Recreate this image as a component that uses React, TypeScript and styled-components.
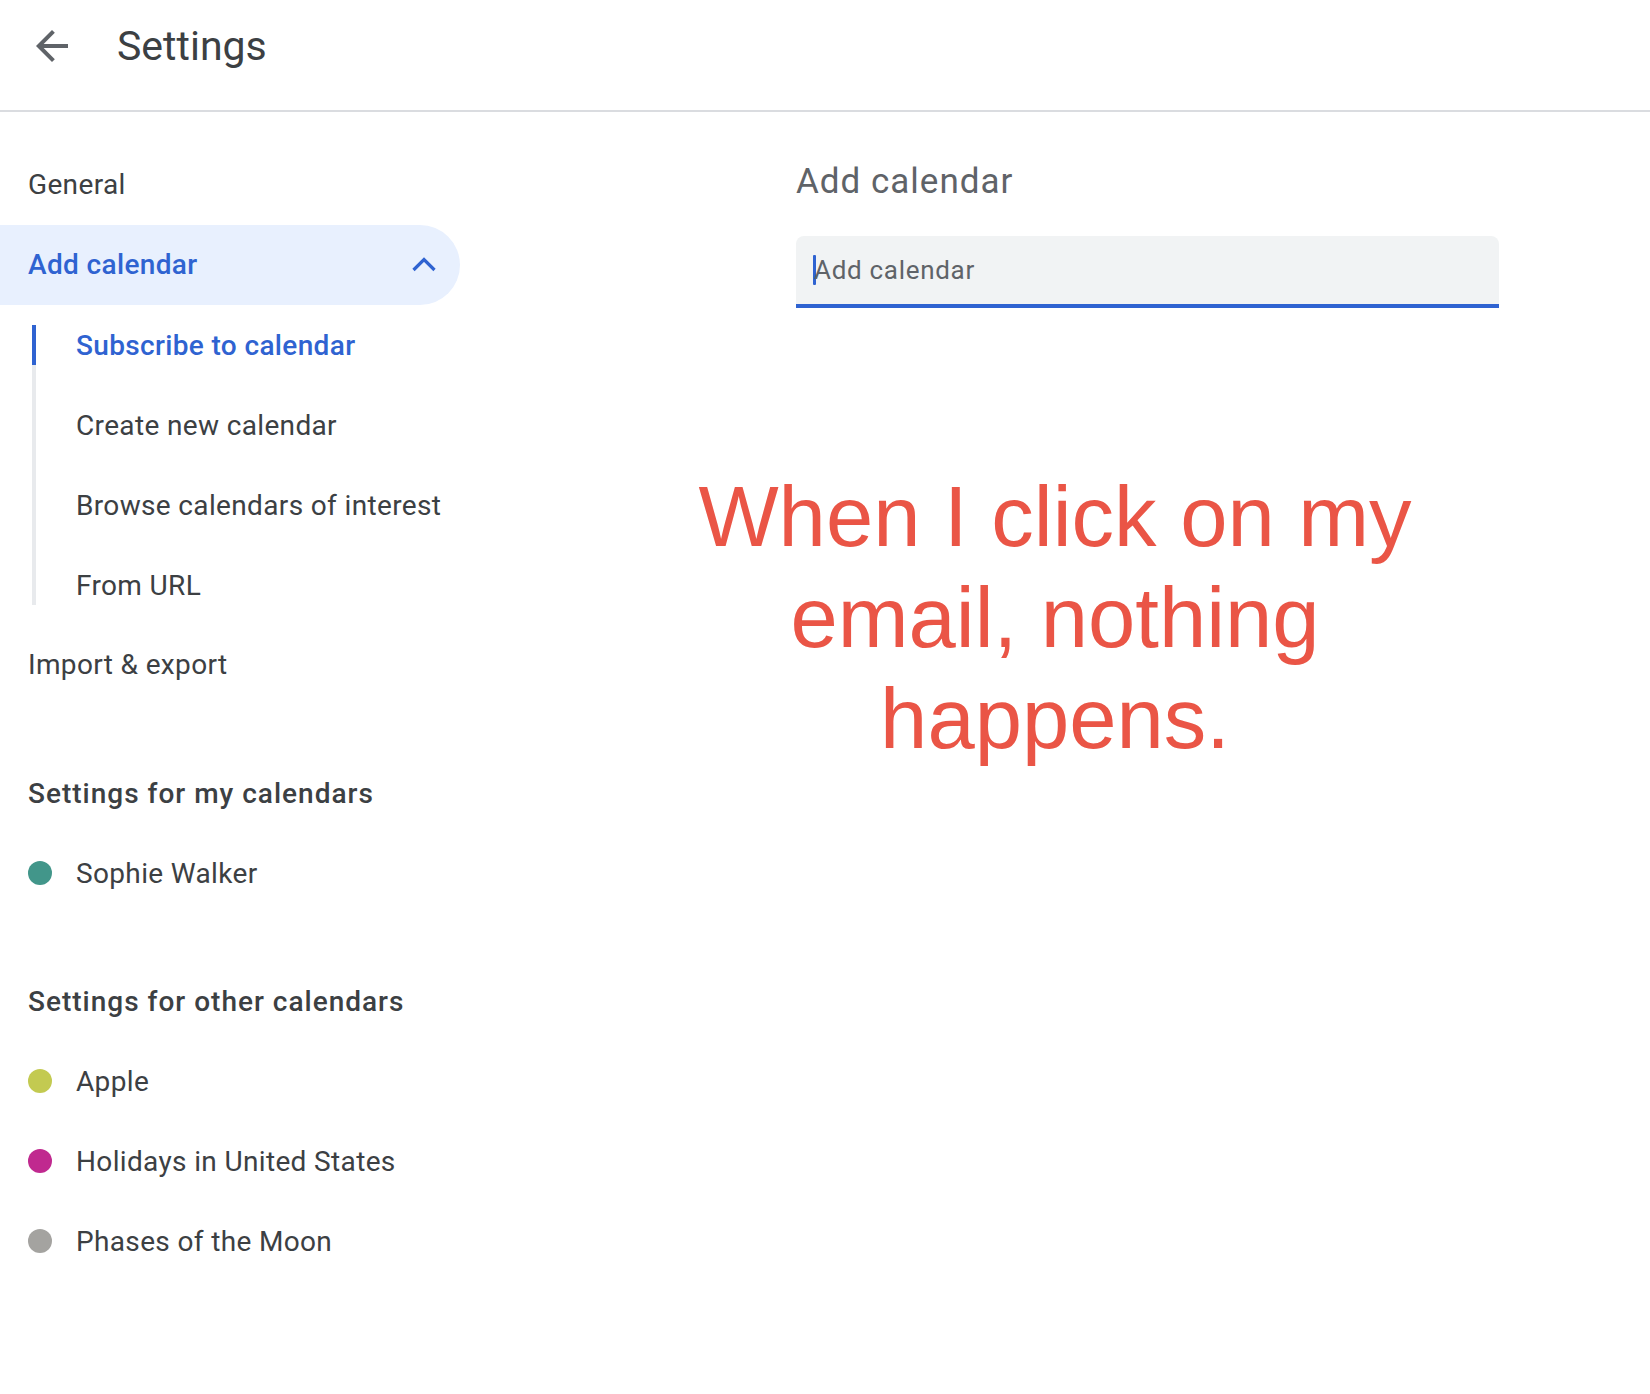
import React from "react";
import styled, { createGlobalStyle } from "styled-components";

const GlobalStyle = createGlobalStyle`
  html, body {
    margin: 0;
    padding: 0;
    background: #fff;
  }
  body {
    font-family: Roboto, "Noto Sans", "Liberation Sans", sans-serif;
    color: #3c4043;
  }
`;

const Page = styled.div`
  width: 1650px;
  min-height: 1394px;
  background: #fff;
`;

const Header = styled.header`
  height: 92px;
  padding: 0 0 18px 28px;
  display: flex;
  align-items: center;
  gap: 41px;
  border-bottom: 2px solid #dadce0;
`;

const BackButton = styled.button`
  width: 48px;
  height: 48px;
  padding: 0;
  border: none;
  background: none;
  display: flex;
  align-items: center;
  justify-content: center;
  cursor: pointer;
  color: #5f6368;
`;

const Title = styled.h1`
  margin: 0;
  font-size: 41px;
  font-weight: 400;
  color: #3c4043;
  line-height: 48px;
`;

const Body = styled.div`
  display: flex;
  align-items: flex-start;
`;

const Sidebar = styled.nav`
  width: 460px;
  padding-top: 33px;
  flex-shrink: 0;
  display: flex;
  flex-direction: column;
`;

interface NavItemProps {
  $active?: boolean;
}

const NavItem = styled.div<NavItemProps>`
  height: 80px;
  padding: 0 23px 0 28px;
  display: flex;
  align-items: center;
  justify-content: space-between;
  font-size: 28px;
  letter-spacing: 0.35px;
  line-height: 80px;
  cursor: pointer;
  color: ${(p) => (p.$active ? "#2f63d1" : "#3c4043")};
  font-weight: ${(p) => (p.$active ? 500 : 400)};
  background: ${(p) => (p.$active ? "#e8f0fe" : "transparent")};
  border-radius: 0 40px 40px 0;
`;

const SubList = styled.div`
  position: relative;
  &::before {
    content: "";
    position: absolute;
    left: 32px;
    top: 20px;
    bottom: 20px;
    width: 4px;
    background: #e8eaed;
  }
`;

const SubItem = styled.div<NavItemProps>`
  position: relative;
  height: 80px;
  padding-left: 76px;
  display: flex;
  align-items: center;
  font-size: 28px;
  letter-spacing: 0.35px;
  cursor: pointer;
  color: ${(p) => (p.$active ? "#2f63d1" : "#3c4043")};
  font-weight: ${(p) => (p.$active ? 500 : 400)};
  &::before {
    content: "";
    display: ${(p) => (p.$active ? "block" : "none")};
    position: absolute;
    left: 32px;
    top: 20px;
    width: 4px;
    height: 40px;
    background: #2f63d1;
  }
`;

const SectionTitle = styled.div`
  height: 80px;
  margin-top: 48px;
  padding-left: 28px;
  display: flex;
  align-items: center;
  font-size: 28px;
  font-weight: 500;
  letter-spacing: 1px;
  color: #3c4043;
`;

const CalendarRow = styled.div`
  height: 80px;
  padding-left: 28px;
  display: flex;
  align-items: center;
  gap: 24px;
  font-size: 28px;
  letter-spacing: 0.35px;
  color: #3c4043;
  cursor: pointer;
`;

const Dot = styled.span<{ $color: string }>`
  width: 24px;
  height: 24px;
  border-radius: 50%;
  background: ${(p) => p.$color};
  flex-shrink: 0;
`;

const Main = styled.main`
  margin-left: 336px;
  padding-top: 50px;
  width: 703px;
`;

const PanelTitle = styled.h2`
  margin: 0;
  font-size: 35px;
  font-weight: 400;
  letter-spacing: 1px;
  line-height: 40px;
  color: #5f6368;
`;

const Field = styled.div`
  margin-top: 34px;
  height: 68px;
  padding-left: 17px;
  display: flex;
  align-items: center;
  background: #f1f3f4;
  border-radius: 8px 8px 0 0;
  border-bottom: 4px solid #2f63d1;
`;

const Caret = styled.span`
  width: 3px;
  height: 30px;
  background: #2f63d1;
  border-radius: 1px;
  flex-shrink: 0;
`;

const FieldInput = styled.input`
  flex: 1;
  margin-left: -2px;
  border: none;
  outline: none;
  background: transparent;
  font-family: Roboto, "Noto Sans", sans-serif;
  font-size: 26px;
  letter-spacing: 0.7px;
  color: #3c4043;
  padding: 0;
  &::placeholder {
    color: #5f6368;
    opacity: 1;
  }
`;

const Annotation = styled.p`
  margin: 158px 0 0 -121px;
  width: 760px;
  text-align: center;
  font-family: "Liberation Sans", Arial, sans-serif;
  font-size: 85px;
  line-height: 101px;
  color: #ea5546;
`;

const subItems = [
  "Subscribe to calendar",
  "Create new calendar",
  "Browse calendars of interest",
  "From URL",
];

const myCalendars = [{ name: "Sophie Walker", color: "#42968a" }];

const otherCalendars = [
  { name: "Apple", color: "#c3ca51" },
  { name: "Holidays in United States", color: "#c0298f" },
  { name: "Phases of the Moon", color: "#a4a3a0" },
];

const ArrowBack = () => (
  <svg width="48" height="48" viewBox="0 0 24 24" fill="currentColor">
    <path d="M20 11H7.83l5.59-5.59L12 4l-8 8 8 8 1.41-1.41L7.83 13H20v-2z" />
  </svg>
);

const ChevronUp = () => (
  <svg width="26" height="16" viewBox="0 0 26 16" fill="none">
    <polyline
      points="2.5,13 13,2.5 23.5,13"
      stroke="#2f63d1"
      strokeWidth="3.2"
      strokeLinejoin="miter"
    />
  </svg>
);

const App = () => {
  return (
    <Page>
      <GlobalStyle />
      <Header>
        <BackButton aria-label="Back">
          <ArrowBack />
        </BackButton>
        <Title>Settings</Title>
      </Header>
      <Body>
        <Sidebar>
          <NavItem>General</NavItem>
          <NavItem $active>
            Add calendar
            <ChevronUp />
          </NavItem>
          <SubList>
            {subItems.map((item, i) => (
              <SubItem key={item} $active={i === 0}>
                {item}
              </SubItem>
            ))}
          </SubList>
          <NavItem>Import &amp; export</NavItem>

          <SectionTitle>Settings for my calendars</SectionTitle>
          {myCalendars.map((c) => (
            <CalendarRow key={c.name}>
              <Dot $color={c.color} />
              {c.name}
            </CalendarRow>
          ))}

          <SectionTitle>Settings for other calendars</SectionTitle>
          {otherCalendars.map((c) => (
            <CalendarRow key={c.name}>
              <Dot $color={c.color} />
              {c.name}
            </CalendarRow>
          ))}
        </Sidebar>
        <Main>
          <PanelTitle>Add calendar</PanelTitle>
          <Field>
            <Caret />
            <FieldInput placeholder="Add calendar" />
          </Field>
          <Annotation>When I click on my email, nothing happens.</Annotation>
        </Main>
      </Body>
    </Page>
  );
};

export default App;
